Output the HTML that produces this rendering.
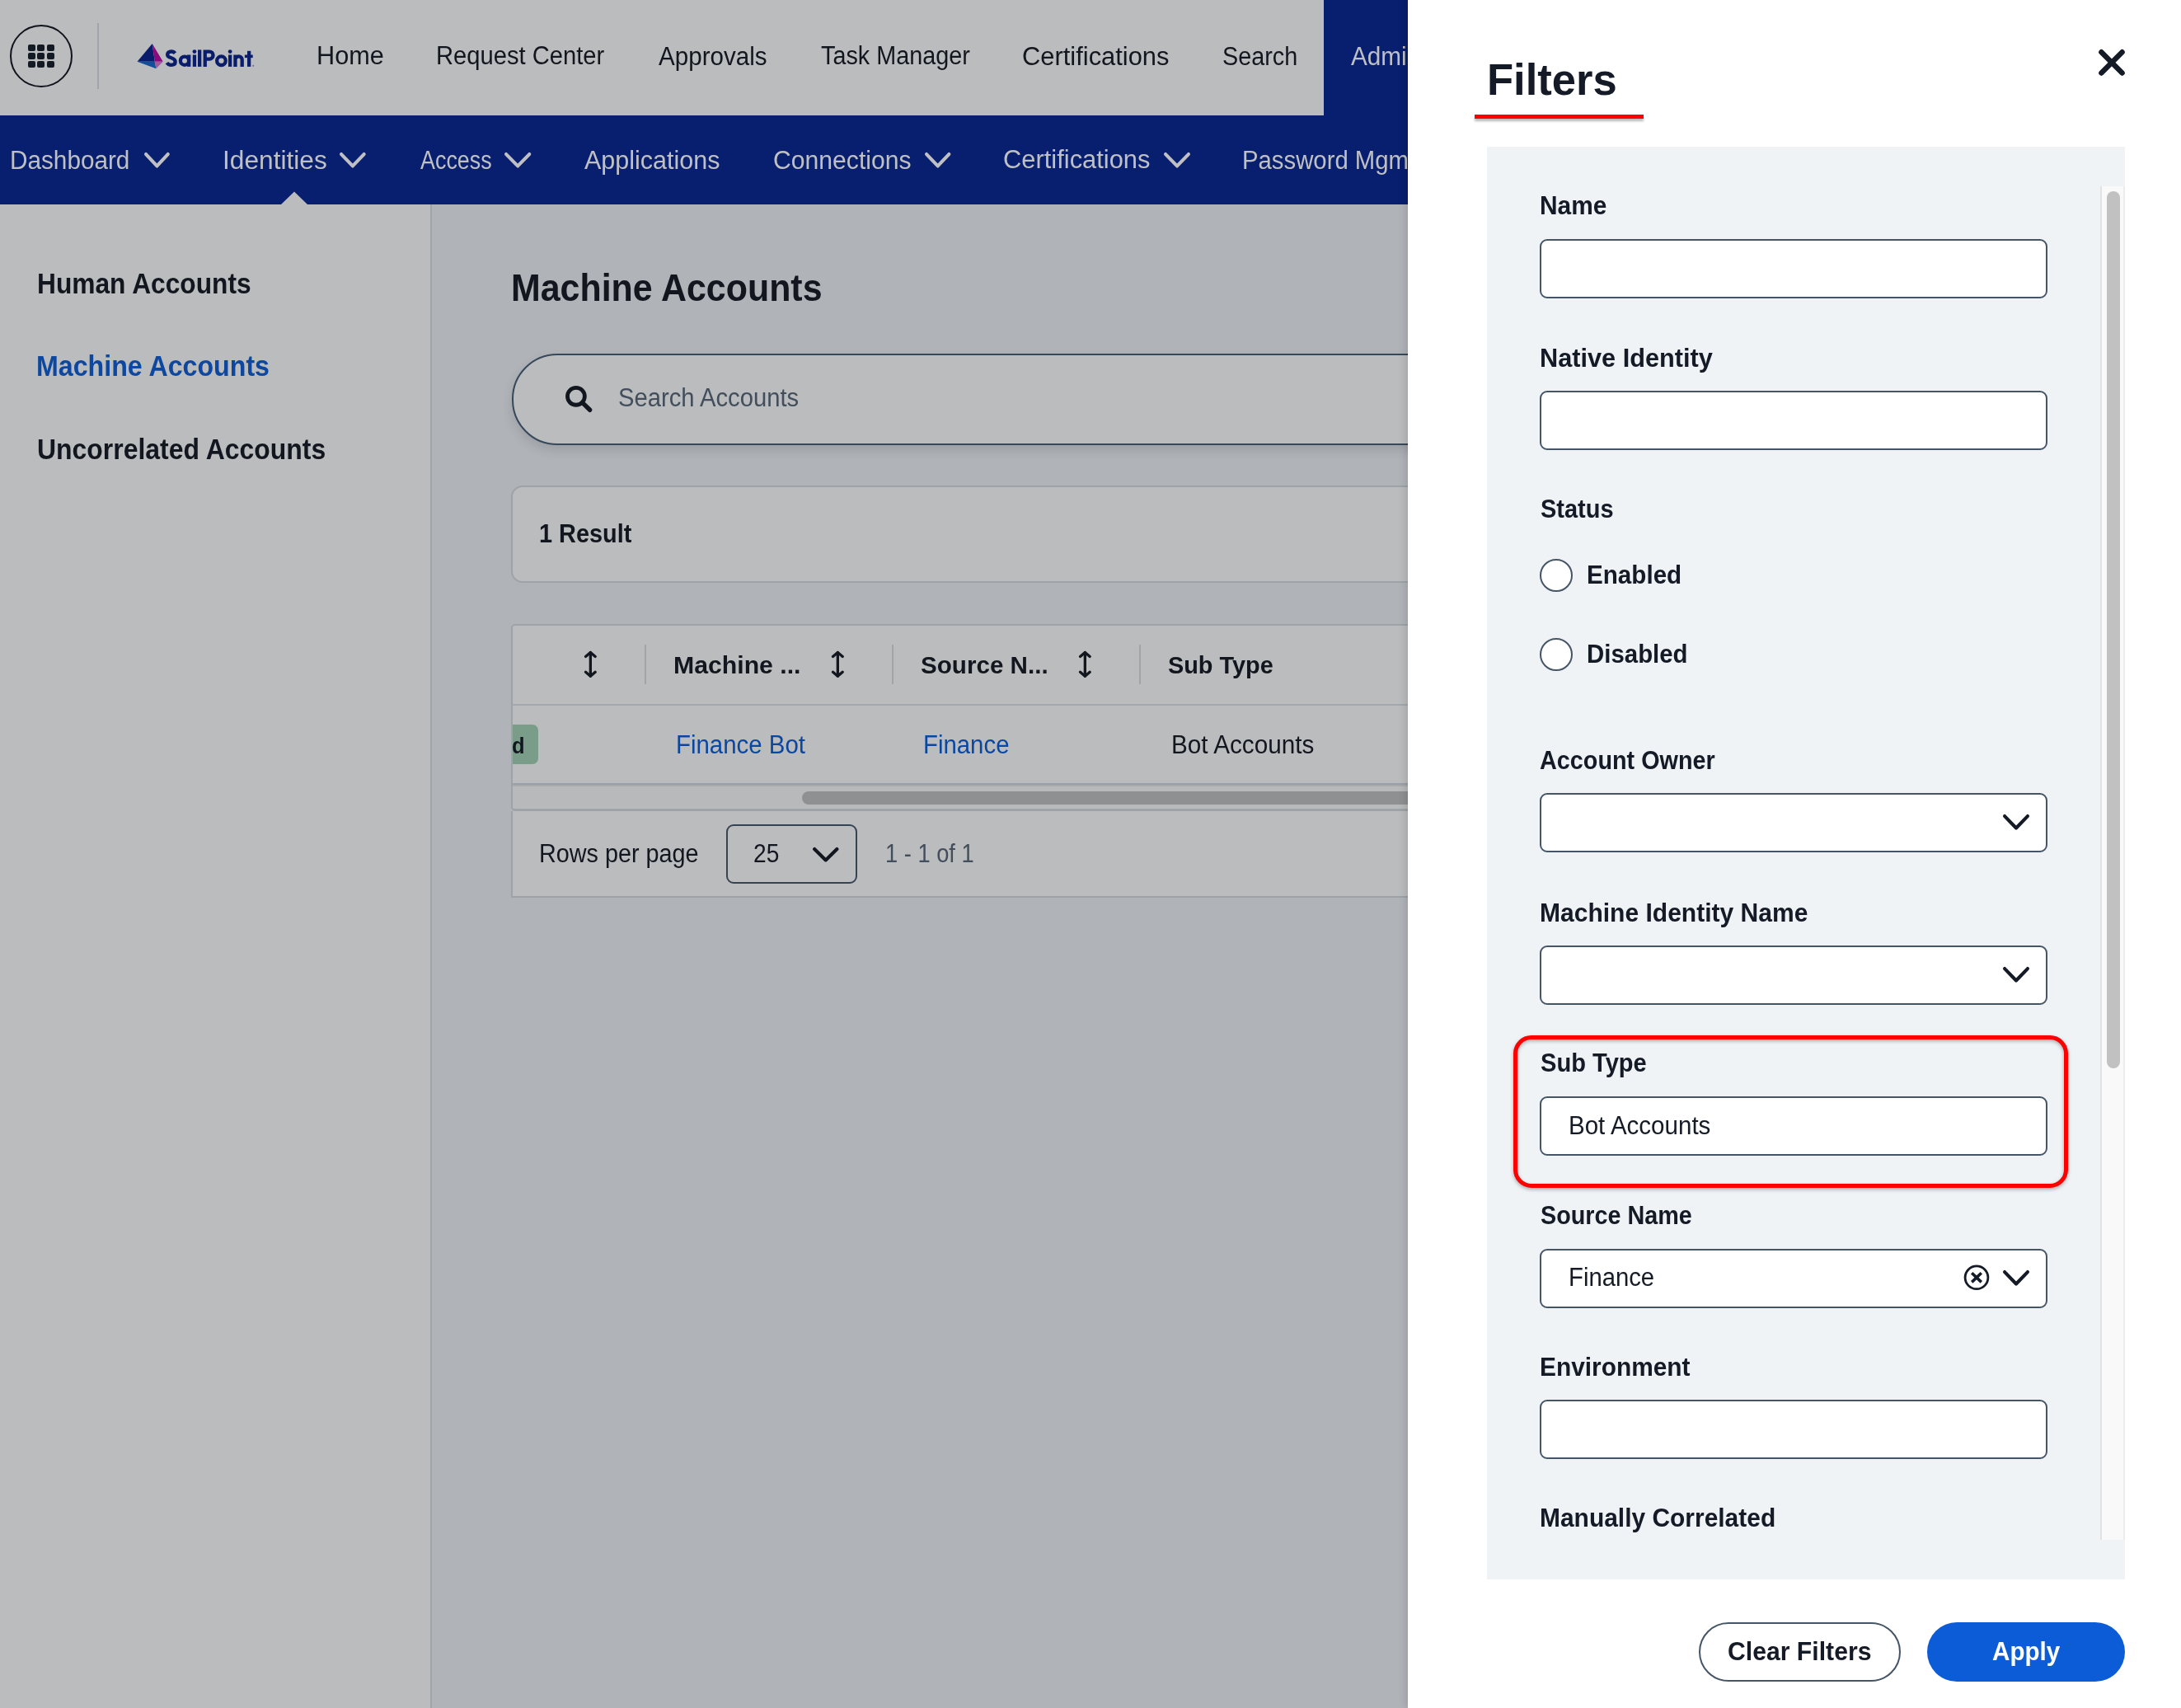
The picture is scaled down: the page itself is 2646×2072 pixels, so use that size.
<!DOCTYPE html>
<html><head><meta charset="utf-8"><style>
html,body{margin:0;padding:0;overflow:hidden}
body{width:2646px;height:2072px;overflow:hidden;position:relative;background:#b0b3b8;font-family:"Liberation Sans",sans-serif}
.a{position:absolute;box-sizing:border-box}
.t{position:absolute;white-space:nowrap;transform-origin:0 0;font-family:"Liberation Sans",sans-serif}
</style></head><body>

<div class="a" style="left:0;top:0;width:1708px;height:140px;background:#bbbcbe"></div>
<div class="a" style="left:1606px;top:0;width:102px;height:140px;background:#081e6e"></div>
<div class="a" style="left:12px;top:30px;width:76px;height:76px;border:2.2px solid #10141c;border-radius:50%"></div>
<div class="a" style="left:34.1px;top:54px;width:9px;height:7.8px;background:#141a23;border-radius:2px"></div>
<div class="a" style="left:45.3px;top:54px;width:9px;height:7.8px;background:#141a23;border-radius:2px"></div>
<div class="a" style="left:56.9px;top:54px;width:9px;height:7.8px;background:#141a23;border-radius:2px"></div>
<div class="a" style="left:34.1px;top:64.1px;width:9px;height:7.8px;background:#141a23;border-radius:2px"></div>
<div class="a" style="left:45.3px;top:64.1px;width:9px;height:7.8px;background:#141a23;border-radius:2px"></div>
<div class="a" style="left:56.9px;top:64.1px;width:9px;height:7.8px;background:#141a23;border-radius:2px"></div>
<div class="a" style="left:34.1px;top:74px;width:9px;height:7.8px;background:#141a23;border-radius:2px"></div>
<div class="a" style="left:45.3px;top:74px;width:9px;height:7.8px;background:#141a23;border-radius:2px"></div>
<div class="a" style="left:56.9px;top:74px;width:9px;height:7.8px;background:#141a23;border-radius:2px"></div>
<div class="a" style="left:118px;top:28px;width:2px;height:80px;background:#a1a5ab"></div>
<svg class="a" style="left:160px;top:48px" width="45" height="40" viewBox="160 48 45 40">
<polygon points="184.7,52.9 166.5,74.8 187.8,74.8" fill="#0a1d6c"/>
<polygon points="184.7,52.9 197.7,74.7 187.8,74.8" fill="#8c0a7c"/>
<polygon points="166.5,74.8 187.8,74.8 189.4,83.3" fill="#134e9a"/>
<polygon points="187.8,74.8 197.7,74.7 189.4,83.3" fill="#a05a9e"/>
</svg>
<svg class="a" style="left:195px;top:55px" width="120" height="32" viewBox="195 55 120 32">
<g fill="none" stroke="#0a1d6c" stroke-width="4.3">
<path d="M212.4 64.6 C211.2 63 209.6 62.5 207.7 62.5 C205 62.5 203.1 64 203.1 66.3 C203.1 68.7 205.1 69.5 207.9 70.3 C210.9 71.2 212.7 72.5 212.7 75.1 C212.7 77.5 210.6 78.8 207.7 78.8 C205.2 78.8 203.5 77.7 202.5 76.1"/>
<circle cx="224" cy="73.7" r="5.1"/>
<path d="M229.2 66.5 V80.9"/>
<path d="M235.95 66.5 V80.9"/>
<path d="M242.15 60.4 V80.9"/>
<path d="M248.75 80.9 V62.55 H254.05 A4.5 4.5 0 0 1 254.05 71.55 H248.75"/>
<circle cx="268.45" cy="73.7" r="5.3"/>
<path d="M279.15 66.5 V80.9"/>
<path d="M285.45 66.5 V80.9 M285.45 72.5 A4.125 4.125 0 0 1 293.7 72.5 V80.9"/>
<path d="M302.15 61.8 V80.9"/>
</g>
<g fill="#0a1d6c"><circle cx="235.95" cy="62.6" r="2.4"/><circle cx="279.15" cy="62.6" r="2.4"/><rect x="296.9" y="66.5" width="9.8" height="3.6"/></g>
<circle cx="307.3" cy="79.8" r="1" fill="#5a6a9a"/>
</svg>
<div class="a" style="left:0;top:140px;width:1708px;height:108px;background:#081e6e"></div>
<svg class="a" style="left:169.6px;top:180px" width="40.80000000000001" height="28.5"><polyline points="7.1,7.1 20.400000000000006,21.4 33.70000000000001,7.1" fill="none" stroke="#bfc0c4" stroke-width="4.2" stroke-linecap="round" stroke-linejoin="round"/></svg>
<svg class="a" style="left:407px;top:180px" width="41.69999999999999" height="28.5"><polyline points="7.1,7.1 20.849999999999994,21.4 34.59999999999999,7.1" fill="none" stroke="#bfc0c4" stroke-width="4.2" stroke-linecap="round" stroke-linejoin="round"/></svg>
<svg class="a" style="left:607px;top:180px" width="42.299999999999955" height="28.5"><polyline points="7.1,7.1 21.149999999999977,21.4 35.19999999999995,7.1" fill="none" stroke="#bfc0c4" stroke-width="4.2" stroke-linecap="round" stroke-linejoin="round"/></svg>
<svg class="a" style="left:1117.3px;top:180px" width="41.40000000000009" height="28.5"><polyline points="7.1,7.1 20.700000000000045,21.4 34.30000000000009,7.1" fill="none" stroke="#bfc0c4" stroke-width="4.2" stroke-linecap="round" stroke-linejoin="round"/></svg>
<svg class="a" style="left:1407px;top:180px" width="42" height="28.5"><polyline points="7.1,7.1 21.0,21.4 34.9,7.1" fill="none" stroke="#bfc0c4" stroke-width="4.2" stroke-linecap="round" stroke-linejoin="round"/></svg>
<div class="a" style="left:0;top:248px;width:522px;height:1824px;background:#bbbcbe"></div>
<div class="a" style="left:522px;top:248px;width:2px;height:1824px;background:#9fa4aa"></div>
<svg class="a" style="left:340px;top:231px" width="34" height="18"><polygon points="1,17 17,1.5 33,17" fill="#bbbcbe"/></svg>
<div class="a" style="left:621px;top:428.5px;width:1300px;height:111.5px;border:2px solid #37485a;border-radius:55px;background:#bbbcbe;box-shadow:0 6px 14px rgba(0,0,0,0.12)"></div>
<svg class="a" style="left:682px;top:463px" width="42" height="42"><circle cx="16.9" cy="17.8" r="10.45" fill="none" stroke="#12161e" stroke-width="4.8"/><line x1="24.5" y1="25.4" x2="33.6" y2="34.3" stroke="#12161e" stroke-width="5.4" stroke-linecap="round"/></svg>
<div class="a" style="left:620px;top:588.5px;width:1300px;height:118px;border:2px solid #9ea3a8;border-radius:14px;background:#bbbcbe"></div>
<div class="a" style="left:620px;top:757px;width:1300px;height:226.5px;border:2px solid #9ea3a8;border-bottom-width:3px;border-radius:5px;background:#bbbcbe"></div>
<div class="a" style="left:622px;top:854px;width:1100px;height:2px;background:#a3a8b0"></div>
<div class="a" style="left:622px;top:950px;width:1100px;height:2px;background:#98a0ab"></div>
<div class="a" style="left:622px;top:952px;width:1100px;height:2px;background:#a8a9ab"></div>
<div class="a" style="left:622px;top:954px;width:1100px;height:26px;background:#b8b9bb"></div>
<div class="a" style="left:973px;top:960px;width:900px;height:16px;border-radius:8px;background:#8f9092"></div>
<div class="a" style="left:782px;top:782px;width:2px;height:48px;background:#a0a5aa"></div>
<div class="a" style="left:1082px;top:782px;width:2px;height:48px;background:#a0a5aa"></div>
<div class="a" style="left:1382px;top:782px;width:2px;height:48px;background:#a0a5aa"></div>
<svg class="a" style="left:705.7px;top:787.2px" width="20.699999999999932" height="37.69999999999993"><g fill="none" stroke="#12161e" stroke-width="3.3" stroke-linecap="round" stroke-linejoin="round"><line x1="10.349999999999966" y1="4.5" x2="10.349999999999966" y2="33.19999999999993"/><polyline points="4.5,9.5 10.349999999999966,4.5 16.199999999999932,9.5"/><polyline points="4.5,28.199999999999932 10.349999999999966,33.19999999999993 16.199999999999932,28.199999999999932"/></g></svg>
<svg class="a" style="left:1005.7px;top:787.2px" width="20.699999999999932" height="37.69999999999993"><g fill="none" stroke="#12161e" stroke-width="3.3" stroke-linecap="round" stroke-linejoin="round"><line x1="10.349999999999966" y1="4.5" x2="10.349999999999966" y2="33.19999999999993"/><polyline points="4.5,9.5 10.349999999999966,4.5 16.199999999999932,9.5"/><polyline points="4.5,28.199999999999932 10.349999999999966,33.19999999999993 16.199999999999932,28.199999999999932"/></g></svg>
<svg class="a" style="left:1305.7px;top:787.2px" width="20.700000000000045" height="37.69999999999993"><g fill="none" stroke="#12161e" stroke-width="3.3" stroke-linecap="round" stroke-linejoin="round"><line x1="10.350000000000023" y1="4.5" x2="10.350000000000023" y2="33.19999999999993"/><polyline points="4.5,9.5 10.350000000000023,4.5 16.200000000000045,9.5"/><polyline points="4.5,28.199999999999932 10.350000000000023,33.19999999999993 16.200000000000045,28.199999999999932"/></g></svg>
<div class="a" style="left:590px;top:879px;width:63px;height:48px;border-radius:7px;background:#7a9d8a"></div>
<div class="a" style="left:560px;top:870px;width:60px;height:70px;background:#b0b3b8"></div>
<div class="a" style="left:620px;top:864px;width:2px;height:84px;background:#9ea3a8"></div>
<div class="a" style="left:620px;top:984px;width:1300px;height:105px;border:2px solid #9ea3a8;border-top:none;background:#bbbcbe"></div>
<div class="a" style="left:880.5px;top:1000px;width:159px;height:71.5px;border:2px solid #364352;border-radius:9px"></div>
<svg class="a" style="left:981px;top:1023px" width="41.5" height="27.5"><polyline points="7.1,7.1 20.75,20.4 34.4,7.1" fill="none" stroke="#12161e" stroke-width="4.2" stroke-linecap="round" stroke-linejoin="round"/></svg>
<div class="t" style="left:384.37px;top:52.44px;font-size:30.67px;line-height:30.67px;font-weight:400;color:#12161e;transform:scaleX(0.9996)">Home</div>
<div class="t" style="left:529.37px;top:52.44px;font-size:30.67px;line-height:30.67px;font-weight:400;color:#12161e;transform:scaleX(0.9513)">Request Center</div>
<div class="t" style="left:799.00px;top:52.66px;font-size:30.67px;line-height:30.67px;font-weight:400;color:#12161e;transform:scaleX(0.9649)">Approvals</div>
<div class="t" style="left:995.58px;top:52.44px;font-size:30.67px;line-height:30.67px;font-weight:400;color:#12161e;transform:scaleX(0.9386)">Task Manager</div>
<div class="t" style="left:1240.36px;top:53.03px;font-size:30.67px;line-height:30.67px;font-weight:400;color:#12161e;transform:scaleX(1.0073)">Certifications</div>
<div class="t" style="left:1483.12px;top:53.03px;font-size:30.67px;line-height:30.67px;font-weight:400;color:#12161e;transform:scaleX(0.9384)">Search</div>
<div class="t" style="left:1639.37px;top:53.03px;font-size:30.67px;line-height:30.67px;font-weight:400;color:#bfc0c4;transform:scaleX(0.9694)">Admin</div>
<div class="t" style="left:12.42px;top:178.51px;font-size:30.67px;line-height:30.67px;font-weight:400;color:#bfc0c4;transform:scaleX(0.9694)">Dashboard</div>
<div class="t" style="left:269.90px;top:178.51px;font-size:30.67px;line-height:30.67px;font-weight:400;color:#bfc0c4;transform:scaleX(1.0333)">Identities</div>
<div class="t" style="left:509.74px;top:178.51px;font-size:30.67px;line-height:30.67px;font-weight:400;color:#bfc0c4;transform:scaleX(0.8772)">Access</div>
<div class="t" style="left:709.37px;top:178.51px;font-size:30.67px;line-height:30.67px;font-weight:400;color:#bfc0c4;transform:scaleX(0.9955)">Applications</div>
<div class="t" style="left:938.40px;top:178.51px;font-size:30.67px;line-height:30.67px;font-weight:400;color:#bfc0c4;transform:scaleX(0.9836)">Connections</div>
<div class="t" style="left:1217.36px;top:178.29px;font-size:30.67px;line-height:30.67px;font-weight:400;color:#bfc0c4;transform:scaleX(1.0073)">Certifications</div>
<div class="t" style="left:1507.34px;top:178.71px;font-size:30.67px;line-height:30.67px;font-weight:400;color:#bfc0c4;transform:scaleX(0.9563)">Password Mgm</div>
<div class="t" style="left:44.58px;top:327.09px;font-size:35.47px;line-height:35.47px;font-weight:700;color:#12161e;transform:scaleX(0.8942)">Human Accounts</div>
<div class="t" style="left:43.97px;top:427.15px;font-size:35.47px;line-height:35.47px;font-weight:700;color:#0d479f;transform:scaleX(0.9069)">Machine Accounts</div>
<div class="t" style="left:44.57px;top:527.67px;font-size:35.47px;line-height:35.47px;font-weight:700;color:#12161e;transform:scaleX(0.9004)">Uncorrelated Accounts</div>
<div class="t" style="left:620.22px;top:325.74px;font-size:46.37px;line-height:46.37px;font-weight:700;color:#12161e;transform:scaleX(0.9256)">Machine Accounts</div>
<div class="t" style="left:750.46px;top:467.44px;font-size:30.67px;line-height:30.67px;font-weight:400;color:#434e5c;transform:scaleX(0.9527)">Search Accounts</div>
<div class="t" style="left:654.49px;top:632.44px;font-size:30.67px;line-height:30.67px;font-weight:700;color:#12161e;transform:scaleX(0.9425)">1 Result</div>
<div class="t" style="left:816.50px;top:791.61px;font-size:29.94px;line-height:29.94px;font-weight:700;color:#12161e;transform:scaleX(1.0095)">Machine ...</div>
<div class="t" style="left:1117.38px;top:791.61px;font-size:29.94px;line-height:29.94px;font-weight:700;color:#12161e;transform:scaleX(0.9887)">Source N...</div>
<div class="t" style="left:1417.41px;top:791.61px;font-size:29.94px;line-height:29.94px;font-weight:700;color:#12161e;transform:scaleX(0.9636)">Sub Type</div>
<div class="t" style="left:820.19px;top:888.44px;font-size:30.67px;line-height:30.67px;font-weight:400;color:#0c479f;transform:scaleX(0.9598)">Finance Bot</div>
<div class="t" style="left:1120.20px;top:888.44px;font-size:30.67px;line-height:30.67px;font-weight:400;color:#0c479f;transform:scaleX(0.9578)">Finance</div>
<div class="t" style="left:1421.02px;top:888.44px;font-size:30.67px;line-height:30.67px;font-weight:400;color:#12161e;transform:scaleX(0.9681)">Bot Accounts</div>
<div class="t" style="left:621.07px;top:890.74px;font-size:27.47px;line-height:27.47px;font-weight:700;color:#12161e;transform:scaleX(0.9286)">d</div>
<div class="t" style="left:654.40px;top:1020.29px;font-size:30.67px;line-height:30.67px;font-weight:400;color:#12161e;transform:scaleX(0.9384)">Rows per page</div>
<div class="t" style="left:914.38px;top:1020.29px;font-size:30.67px;line-height:30.67px;font-weight:400;color:#12161e;transform:scaleX(0.9176)">25</div>
<div class="t" style="left:1073.59px;top:1020.29px;font-size:30.67px;line-height:30.67px;font-weight:400;color:#434e5c;transform:scaleX(0.8896)">1 - 1 of 1</div>
<div class="a" style="left:1708px;top:0;width:938px;height:2072px;background:#ffffff;box-shadow:-2px 0 10px rgba(0,0,0,0.15)"></div>
<div class="a" style="left:1789px;top:139px;width:205px;height:5px;background:#ff0000;box-shadow:0 3px 3px rgba(0,0,0,0.28)"></div>
<svg class="a" style="left:2540px;top:53px" width="44" height="46"><g stroke="#151b26" stroke-width="6.4" stroke-linecap="round"><line x1="9.4" y1="10.2" x2="34.6" y2="35.6"/><line x1="34.6" y1="10.2" x2="9.4" y2="35.6"/></g></svg>
<div class="a" style="left:1804px;top:178px;width:774px;height:1738px;background:#eff3f6"></div>
<div class="a" style="left:2548px;top:225.5px;width:30px;height:1642px;background:#f9f9f9;border-left:2px solid #e3e3e3;border-right:2px solid #ececec"></div>
<div class="a" style="left:2556px;top:232px;width:16px;height:1064px;border-radius:8px;background:#c1c1c1"></div>
<div class="a" style="left:1868px;top:290px;width:616px;height:72px;border:2px solid #465566;border-radius:9px;background:#fff"></div>
<div class="a" style="left:1868px;top:473.5px;width:616px;height:72px;border:2px solid #465566;border-radius:9px;background:#fff"></div>
<div class="a" style="left:1868px;top:962px;width:616px;height:72px;border:2px solid #465566;border-radius:9px;background:#fff"></div>
<div class="a" style="left:1868px;top:1146.5px;width:616px;height:72px;border:2px solid #465566;border-radius:9px;background:#fff"></div>
<div class="a" style="left:1868px;top:1330px;width:616px;height:72px;border:2px solid #465566;border-radius:9px;background:#fff"></div>
<div class="a" style="left:1868px;top:1514.5px;width:616px;height:72px;border:2px solid #465566;border-radius:9px;background:#fff"></div>
<div class="a" style="left:1868px;top:1698px;width:616px;height:72px;border:2px solid #465566;border-radius:9px;background:#fff"></div>
<div class="a" style="left:1868px;top:678px;width:40px;height:40px;border:2px solid #465566;border-radius:50%;background:#fff"></div>
<div class="a" style="left:1868px;top:774px;width:40px;height:40px;border:2px solid #465566;border-radius:50%;background:#fff"></div>
<svg class="a" style="left:2425px;top:983.4px" width="42" height="28.600000000000023"><polyline points="7.1,7.1 21.0,21.50000000000002 34.9,7.1" fill="none" stroke="#151b26" stroke-width="4.2" stroke-linecap="round" stroke-linejoin="round"/></svg>
<svg class="a" style="left:2425px;top:1167.8px" width="42" height="28.600000000000136"><polyline points="7.1,7.1 21.0,21.500000000000135 34.9,7.1" fill="none" stroke="#151b26" stroke-width="4.2" stroke-linecap="round" stroke-linejoin="round"/></svg>
<svg class="a" style="left:2425px;top:1536px" width="42" height="28.59999999999991"><polyline points="7.1,7.1 21.0,21.499999999999908 34.9,7.1" fill="none" stroke="#151b26" stroke-width="4.2" stroke-linecap="round" stroke-linejoin="round"/></svg>
<svg class="a" style="left:2380px;top:1533px" width="36" height="36"><circle cx="18" cy="16.8" r="13.9" fill="none" stroke="#151b26" stroke-width="2.8"/><g stroke="#151b26" stroke-width="3.6" stroke-linecap="butt"><line x1="12.2" y1="11.2" x2="23.8" y2="22.4"/><line x1="23.8" y1="11.2" x2="12.2" y2="22.4"/></g></svg>
<div class="a" style="left:1836px;top:1256px;width:673px;height:185px;border:5px solid #ff0000;border-radius:22px;filter:drop-shadow(0 2px 2px rgba(0,0,0,0.3))"></div>
<div class="a" style="left:2061px;top:1968px;width:245px;height:72px;border:2px solid #465566;border-radius:36px;background:#fff"></div>
<div class="a" style="left:2337.6px;top:1968px;width:240.4px;height:72px;border-radius:36px;background:#0b5cd6"></div>
<div class="t" style="left:1804.08px;top:69.59px;font-size:53.63px;line-height:53.63px;font-weight:700;color:#151b26;transform:scaleX(0.9806)">Filters</div>
<div class="t" style="left:1868.42px;top:234.44px;font-size:30.67px;line-height:30.67px;font-weight:700;color:#151b26;transform:scaleX(0.9749)">Name</div>
<div class="t" style="left:1868.37px;top:419.29px;font-size:30.67px;line-height:30.67px;font-weight:700;color:#151b26;transform:scaleX(1.0013)">Native Identity</div>
<div class="t" style="left:1869.42px;top:602.29px;font-size:30.67px;line-height:30.67px;font-weight:700;color:#151b26;transform:scaleX(0.9453)">Status</div>
<div class="t" style="left:1924.59px;top:682.29px;font-size:30.67px;line-height:30.67px;font-weight:700;color:#151b26;transform:scaleX(0.9662)">Enabled</div>
<div class="t" style="left:1924.60px;top:778.29px;font-size:30.67px;line-height:30.67px;font-weight:700;color:#151b26;transform:scaleX(0.9594)">Disabled</div>
<div class="t" style="left:1868.43px;top:907.29px;font-size:30.67px;line-height:30.67px;font-weight:700;color:#151b26;transform:scaleX(0.9389)">Account Owner</div>
<div class="t" style="left:1868.41px;top:1092.03px;font-size:30.67px;line-height:30.67px;font-weight:700;color:#151b26;transform:scaleX(0.9795)">Machine Identity Name</div>
<div class="t" style="left:1869.44px;top:1274.37px;font-size:31.4px;line-height:31.4px;font-weight:700;color:#151b26;transform:scaleX(0.9268)">Sub Type</div>
<div class="t" style="left:1903.18px;top:1350.03px;font-size:30.67px;line-height:30.67px;font-weight:400;color:#151b26;transform:scaleX(0.9632)">Bot Accounts</div>
<div class="t" style="left:1869.43px;top:1459.29px;font-size:30.67px;line-height:30.67px;font-weight:700;color:#151b26;transform:scaleX(0.9380)">Source Name</div>
<div class="t" style="left:1903.21px;top:1534.29px;font-size:30.67px;line-height:30.67px;font-weight:400;color:#151b26;transform:scaleX(0.9549)">Finance</div>
<div class="t" style="left:1868.42px;top:1643.29px;font-size:30.67px;line-height:30.67px;font-weight:700;color:#151b26;transform:scaleX(0.9744)">Environment</div>
<div class="t" style="left:1868.42px;top:1826.29px;font-size:30.67px;line-height:30.67px;font-weight:700;color:#151b26;transform:scaleX(0.9767)">Manually Correlated</div>
<div class="t" style="left:2096.13px;top:1988.29px;font-size:30.67px;line-height:30.67px;font-weight:700;color:#151b26;transform:scaleX(0.9844)">Clear Filters</div>
<div class="t" style="left:2416.55px;top:1988.43px;font-size:30.67px;line-height:30.67px;font-weight:700;color:#ffffff;transform:scaleX(0.9657)">Apply</div>
</body></html>
